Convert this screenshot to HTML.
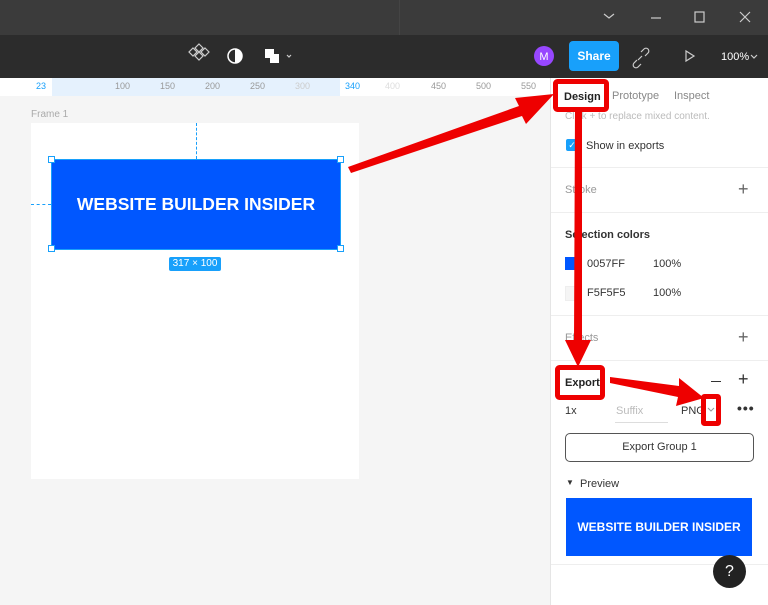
<!DOCTYPE html>
<html><head><style>
body{margin:0;width:768px;height:605px;overflow:hidden;font-family:"Liberation Sans",sans-serif;background:#f5f5f5;position:relative}
.a{position:absolute}
.t{font-size:11px;color:#333}
</style></head><body>
<div class="a" style="left:0;top:0;width:768px;height:35px;background:#3b3b3b"></div>
<div class="a" style="left:399px;top:0;width:1px;height:35px;background:#444"></div>
<div class="a" style="left:0;top:35px;width:768px;height:43px;background:#2c2c2c"></div>
<svg class="a" style="left:0;top:0" width="768" height="78">
<g stroke="#ccc" fill="none" stroke-width="1.2">
<path d="M604 14l5 4 5-4"/><path d="M651 18h10"/><rect x="695" y="12" width="9" height="10"/><path d="M740 12l10 10M750 12l-10 10"/>
<path d="M199 48l4 4-4 4-4-4z M199 56l4 4-4 4-4-4z M193 52l4 4-4 4-4-4z M205 52l4 4-4 4-4-4z" transform="translate(0,-4)"/>
<path d="M686 51v10l8-5z"/>
<path d="M638 60l4-4M641 52l3-3a2.5 2.5 0 0 1 4 4l-3 3M641 64l-3 3a2.5 2.5 0 0 1-4-4l3-3" />
<path d="M287 55l2 2 2-2M751 55l3 3 3-3"/>
</g>
<circle cx="235" cy="56" r="7" fill="none" stroke="#fff" stroke-width="1.5"/><path d="M235 49a7 7 0 0 1 0 14z" fill="#fff"/>
<rect x="265" y="49" width="9" height="9" fill="#fff"/><rect x="270" y="54" width="9" height="9" fill="#fff"/>
<circle cx="544" cy="56" r="10" fill="#9747ff"/><text x="544" y="60" fill="#fff" font-size="11" text-anchor="middle" font-family="Liberation Sans">M</text>
<rect x="569" y="41" width="50" height="30" rx="4" fill="#18a0fb"/><text x="594" y="60" fill="#fff" font-size="12" font-weight="bold" text-anchor="middle" font-family="Liberation Sans">Share</text>
<text x="721" y="60" fill="#fff" font-size="11" font-family="Liberation Sans">100%</text>
</svg>
<div class="a" style="left:0;top:78px;width:550px;height:18px;background:#fff"></div>
<div class="a" style="left:52px;top:78px;width:288px;height:18px;background:#e5f1fd"></div>
<svg class="a" style="left:0;top:78px" width="550" height="18" font-family="Liberation Sans" font-size="9" fill="#999">
<text x="36" y="11" fill="#18a0fb">23</text><text x="115" y="11">100</text><text x="160" y="11">150</text><text x="205" y="11">200</text><text x="250" y="11">250</text><text x="295" y="11" fill="#ccc">300</text><text x="345" y="11" fill="#18a0fb">340</text><text x="385" y="11" fill="#ddd">400</text><text x="431" y="11">450</text><text x="476" y="11">500</text><text x="521" y="11">550</text>
</svg>
<div class="a t" style="left:31px;top:109px;color:#aaa;font-size:10px">Frame 1</div>
<div class="a" style="left:31px;top:123px;width:328px;height:356px;background:#fff"></div>
<div class="a" style="left:196px;top:123px;height:36px;border-left:1px dashed #18a0fb"></div>
<div class="a" style="left:31px;top:204px;width:20px;border-top:1px dashed #18a0fb"></div>
<div class="a" style="left:51px;top:159px;width:288px;height:89px;background:#0057ff;border:1px solid #18a0fb;color:#fff;font-weight:bold;font-size:17.5px;text-align:center;line-height:89px">WEBSITE BUILDER INSIDER</div>
<div class="a" style="left:48px;top:156px;width:5px;height:5px;background:#fff;border:1px solid #18a0fb"></div>
<div class="a" style="left:337px;top:156px;width:5px;height:5px;background:#fff;border:1px solid #18a0fb"></div>
<div class="a" style="left:48px;top:245px;width:5px;height:5px;background:#fff;border:1px solid #18a0fb"></div>
<div class="a" style="left:337px;top:245px;width:5px;height:5px;background:#fff;border:1px solid #18a0fb"></div>
<div class="a" style="left:169px;top:257px;width:52px;height:14px;background:#18a0fb;color:#fff;font-size:10px;text-align:center;line-height:14px;border-radius:2px">317 × 100</div>
<div class="a" style="left:550px;top:78px;width:218px;height:527px;background:#fff;border-left:1px solid #e5e5e5"></div>
<div class="a t" style="left:612px;top:90px;color:#888">Prototype</div>
<div class="a t" style="left:674px;top:90px;color:#888">Inspect</div>
<div class="a t" style="left:565px;top:111px;color:#bbb;font-size:10px">Click + to replace mixed content.</div>
<div class="a" style="left:566px;top:139px;width:12px;height:12px;background:#18a0fb;border-radius:2px;color:#fff;font-size:9px;text-align:center;line-height:12px">✓</div>
<div class="a t" style="left:586px;top:140px">Show in exports</div>
<div class="a" style="left:551px;top:167px;width:217px;border-top:1px solid #eee"></div>
<div class="a t" style="left:565px;top:184px;color:#999">Stroke</div>
<div class="a" style="left:738px;top:179px;font-size:18px;color:#666">+</div>
<div class="a" style="left:551px;top:212px;width:217px;border-top:1px solid #eee"></div>
<div class="a t" style="left:565px;top:229px;font-weight:bold">Selection colors</div>
<div class="a" style="left:565px;top:257px;width:13px;height:13px;background:#0057ff"></div>
<div class="a t" style="left:587px;top:258px">0057FF</div><div class="a t" style="left:653px;top:258px">100%</div>
<div class="a" style="left:565px;top:286px;width:13px;height:13px;background:#f5f5f5;border:1px solid #eee"></div>
<div class="a t" style="left:587px;top:287px">F5F5F5</div><div class="a t" style="left:653px;top:287px">100%</div>
<div class="a" style="left:551px;top:315px;width:217px;border-top:1px solid #eee"></div>
<div class="a t" style="left:565px;top:332px;color:#999">Effects</div>
<div class="a" style="left:738px;top:327px;font-size:18px;color:#666">+</div>
<div class="a" style="left:551px;top:360px;width:217px;border-top:1px solid #eee"></div>
<div class="a" style="left:711px;top:381px;width:10px;border-top:1.5px solid #333"></div>
<div class="a" style="left:738px;top:369px;font-size:18px;color:#333">+</div>
<div class="a t" style="left:565px;top:405px">1x</div>
<div class="a t" style="left:616px;top:405px;color:#bbb">Suffix</div>
<div class="a" style="left:615px;top:422px;width:53px;border-top:1px solid #ddd"></div>
<div class="a t" style="left:681px;top:405px">PNG</div>
<div class="a" style="left:737px;top:400px;font-size:14px;font-weight:bold;color:#333;letter-spacing:1px">•••</div>
<div class="a" style="left:565px;top:433px;width:187px;height:27px;border:1px solid #555;border-radius:5px;font-size:11px;color:#333;text-align:center;line-height:27px">Export Group 1</div>
<div class="a t" style="left:566px;top:478px;font-size:8px">▼</div>
<div class="a t" style="left:580px;top:478px">Preview</div>
<div class="a" style="left:566px;top:498px;width:186px;height:58px;background:#0057ff;color:#fff;font-weight:bold;font-size:12px;text-align:center;line-height:58px">WEBSITE BUILDER INSIDER</div>
<div class="a" style="left:551px;top:564px;width:217px;border-top:1px solid #eee"></div>
<div class="a" style="left:713px;top:555px;width:33px;height:33px;border-radius:50%;background:#222;color:#fff;font-size:16px;text-align:center;line-height:33px">?</div>
<svg class="a" style="left:0;top:0" width="768" height="605">
<g stroke="#e00" stroke-width="5" fill="#fff">
<rect x="555.5" y="81.5" width="51" height="28" rx="2"/>
<rect x="557.5" y="367.5" width="45" height="30" rx="2"/>
<rect x="703.5" y="396.5" width="15" height="27" rx="1"/>
</g>
<text x="564" y="100" font-size="11" font-weight="bold" fill="#222" font-family="Liberation Sans">Design</text>
<text x="565" y="386" font-size="11" font-weight="bold" fill="#222" font-family="Liberation Sans">Export</text>
<path d="M708 408l3 3 3-3" stroke="#999" fill="none"/>
<g fill="#e00">
<polygon points="348,167 519,106 515,98 554,94 526,124 522,116 351,173"/>
<polygon points="575,110 582,110 582,340 591,340 578,367 565,340 574,340"/>
<polygon points="610,377 679,386 679,378 704,398 676,406 678,397 610,383"/>
</g>
</svg>
</body></html>
